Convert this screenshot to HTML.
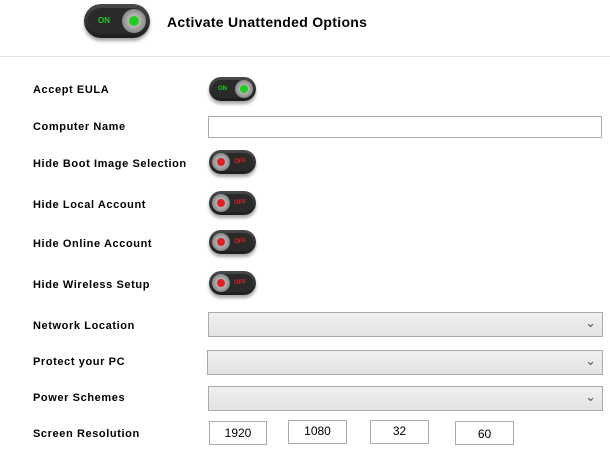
<!DOCTYPE html>
<html><head><style>
body{margin:0;width:610px;height:449px;background:#fff;position:relative;overflow:hidden;font-family:"Comic Sans MS","Liberation Sans",sans-serif}
.a{position:absolute}
.lbl{position:absolute;left:33px;font-size:11px;font-weight:bold;color:#000;letter-spacing:0.6px;line-height:12px}
.tg{position:absolute;width:47px;height:24px;border-radius:12px;background:linear-gradient(#4a4a4a,#1c1c1c);box-shadow:0 3px 3px rgba(0,0,0,.35)}
.tg .in{position:absolute;left:3px;top:3px;right:3px;bottom:3px;border-radius:9px;background:#2a2a2a}
.tg .k{position:absolute;top:3px;width:18px;height:18px;border-radius:50%;background:radial-gradient(#ddd,#888 70%,#555)}
.tg .d{position:absolute;left:5px;top:5px;width:8px;height:8px;border-radius:50%}
.tg .t{position:absolute;top:7px;height:10px;line-height:10px;font:bold 6px/10px "Liberation Sans",sans-serif}
.box{position:absolute;border:1px solid #aaa;background:#fff;box-sizing:border-box;font:12px "Liberation Sans",sans-serif;text-align:center}
.sel{position:absolute;border:1px solid #aaa;box-sizing:border-box;background:linear-gradient(#f0f0f0,#e3e3e3)}
.sel:after{content:"⌄";position:absolute;right:6px;top:2px;font-size:13px;color:#555}
</style></head><body>
<div class="tg" style="left:84px;top:4px;width:66px;height:34px;border-radius:17px">
 <div class="in" style="border-radius:13px;left:4px;top:4px;right:4px;bottom:4px"></div>
 <div class="t" style="left:14px;top:12px;color:#2c2;font-size:8px">ON</div>
 <div class="k" style="left:38px;top:5px;width:24px;height:24px"><div class="d" style="left:7px;top:7px;width:10px;height:10px;background:#2c2"></div></div>
</div>
<div class="a" style="left:167px;top:14px;font-size:14px;font-weight:bold;letter-spacing:0.3px">Activate Unattended Options</div>
<div class="a" style="left:0;top:56px;width:610px;height:1px;background:#e2e2e2"></div>

<div class="lbl" style="top:84px">Accept EULA</div>
<div class="tg" style="left:209px;top:77px"><div class="in"></div><div class="t" style="left:9px;color:#2c2">ON</div><div class="k" style="left:26px"><div class="d" style="background:#2c2"></div></div></div>

<div class="lbl" style="top:121px">Computer Name</div>
<div class="box" style="left:208px;top:116px;width:394px;height:22px"></div>

<div class="lbl" style="top:158px">Hide Boot Image Selection</div>
<div class="tg" style="left:209px;top:150px"><div class="in"></div><div class="k" style="left:3px"><div class="d" style="background:#d22"></div></div><div class="t" style="left:25px;color:#d22">OFF</div></div>

<div class="lbl" style="top:199px">Hide Local Account</div>
<div class="tg" style="left:209px;top:191px"><div class="in"></div><div class="k" style="left:3px"><div class="d" style="background:#d22"></div></div><div class="t" style="left:25px;color:#d22">OFF</div></div>

<div class="lbl" style="top:238px">Hide Online Account</div>
<div class="tg" style="left:209px;top:230px"><div class="in"></div><div class="k" style="left:3px"><div class="d" style="background:#d22"></div></div><div class="t" style="left:25px;color:#d22">OFF</div></div>

<div class="lbl" style="top:279px">Hide Wireless Setup</div>
<div class="tg" style="left:209px;top:271px"><div class="in"></div><div class="k" style="left:3px"><div class="d" style="background:#d22"></div></div><div class="t" style="left:25px;color:#d22">OFF</div></div>

<div class="lbl" style="top:320px">Network Location</div>
<div class="sel" style="left:208px;top:312px;width:395px;height:25px"></div>
<div class="lbl" style="top:356px">Protect your PC</div>
<div class="sel" style="left:207px;top:350px;width:396px;height:25px"></div>
<div class="lbl" style="top:392px">Power Schemes</div>
<div class="sel" style="left:208px;top:386px;width:395px;height:25px"></div>

<div class="lbl" style="top:428px">Screen Resolution</div>
<div class="box" style="left:209px;top:421px;width:58px;height:24px;line-height:22px">1920</div>
<div class="box" style="left:288px;top:420px;width:59px;height:24px;line-height:20px">1080</div>
<div class="box" style="left:370px;top:420px;width:59px;height:24px;line-height:20px">32</div>
<div class="box" style="left:455px;top:421px;width:59px;height:24px;line-height:24px">60</div>
</body></html>
